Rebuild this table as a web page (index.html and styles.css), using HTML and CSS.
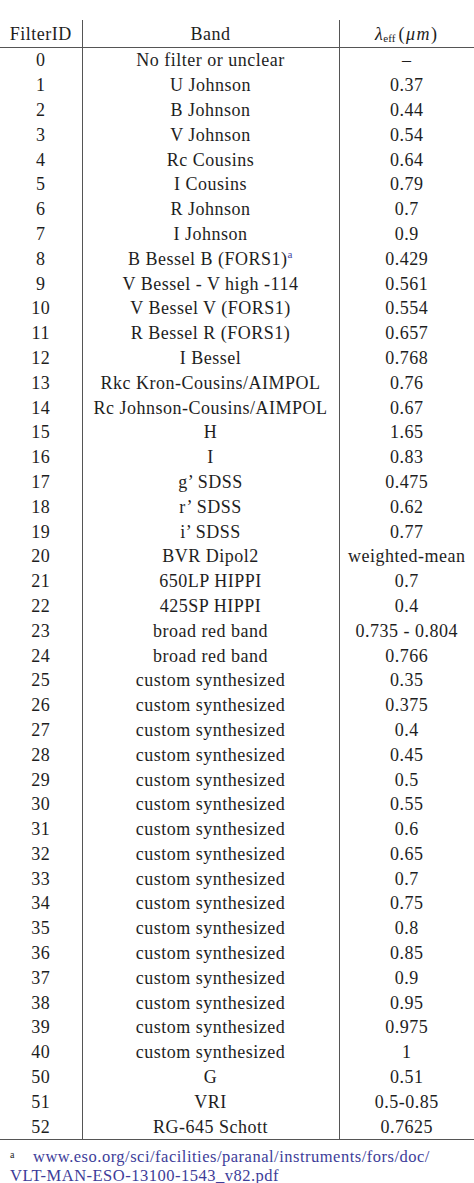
FILE: index.html
```html
<!DOCTYPE html>
<html>
<head>
<meta charset="utf-8">
<link rel="stylesheet" href="styles.css">
</head>
<body>
<div class="page">
<table class="filters">
<colgroup><col class="c1"><col class="c2"><col class="c3"></colgroup>
<thead>
<tr><th>FilterID</th><th>Band</th><th><i class="lam">λ</i><sub class="eff">eff</sub><span class="unit">(<i>μm</i>)</span></th></tr>
</thead>
<tbody>
<tr><td>0</td><td>No filter or unclear</td><td>–</td></tr>
<tr><td>1</td><td>U Johnson</td><td>0.37</td></tr>
<tr><td>2</td><td>B Johnson</td><td>0.44</td></tr>
<tr><td>3</td><td>V Johnson</td><td>0.54</td></tr>
<tr><td>4</td><td>Rc Cousins</td><td>0.64</td></tr>
<tr><td>5</td><td>I Cousins</td><td>0.79</td></tr>
<tr><td>6</td><td>R Johnson</td><td>0.7</td></tr>
<tr><td>7</td><td>I Johnson</td><td>0.9</td></tr>
<tr><td>8</td><td>B Bessel B (FORS1)<sup class="mark">a</sup></td><td>0.429</td></tr>
<tr><td>9</td><td>V Bessel - V high -114</td><td>0.561</td></tr>
<tr><td>10</td><td>V Bessel V (FORS1)</td><td>0.554</td></tr>
<tr><td>11</td><td>R Bessel R (FORS1)</td><td>0.657</td></tr>
<tr><td>12</td><td>I Bessel</td><td>0.768</td></tr>
<tr><td>13</td><td>Rkc Kron-Cousins/AIMPOL</td><td>0.76</td></tr>
<tr><td>14</td><td>Rc Johnson-Cousins/AIMPOL</td><td>0.67</td></tr>
<tr><td>15</td><td>H</td><td>1.65</td></tr>
<tr><td>16</td><td>I</td><td>0.83</td></tr>
<tr><td>17</td><td>g’ SDSS</td><td>0.475</td></tr>
<tr><td>18</td><td>r’ SDSS</td><td>0.62</td></tr>
<tr><td>19</td><td>i’ SDSS</td><td>0.77</td></tr>
<tr><td>20</td><td>BVR Dipol2</td><td>weighted-mean</td></tr>
<tr><td>21</td><td>650LP HIPPI</td><td>0.7</td></tr>
<tr><td>22</td><td>425SP HIPPI</td><td>0.4</td></tr>
<tr><td>23</td><td>broad red band</td><td>0.735 - 0.804</td></tr>
<tr><td>24</td><td>broad red band</td><td>0.766</td></tr>
<tr><td>25</td><td>custom synthesized</td><td>0.35</td></tr>
<tr><td>26</td><td>custom synthesized</td><td>0.375</td></tr>
<tr><td>27</td><td>custom synthesized</td><td>0.4</td></tr>
<tr><td>28</td><td>custom synthesized</td><td>0.45</td></tr>
<tr><td>29</td><td>custom synthesized</td><td>0.5</td></tr>
<tr><td>30</td><td>custom synthesized</td><td>0.55</td></tr>
<tr><td>31</td><td>custom synthesized</td><td>0.6</td></tr>
<tr><td>32</td><td>custom synthesized</td><td>0.65</td></tr>
<tr><td>33</td><td>custom synthesized</td><td>0.7</td></tr>
<tr><td>34</td><td>custom synthesized</td><td>0.75</td></tr>
<tr><td>35</td><td>custom synthesized</td><td>0.8</td></tr>
<tr><td>36</td><td>custom synthesized</td><td>0.85</td></tr>
<tr><td>37</td><td>custom synthesized</td><td>0.9</td></tr>
<tr><td>38</td><td>custom synthesized</td><td>0.95</td></tr>
<tr><td>39</td><td>custom synthesized</td><td>0.975</td></tr>
<tr><td>40</td><td>custom synthesized</td><td>1</td></tr>
<tr><td>50</td><td>G</td><td>0.51</td></tr>
<tr><td>51</td><td>VRI</td><td>0.5-0.85</td></tr>
<tr><td>52</td><td>RG-645 Schott</td><td>0.7625</td></tr>
</tbody>
</table>
<div class="footnote">
<span class="fmark">a</span><span class="flink">www.eso.org/sci/facilities/paranal/instruments/fors/doc/</span><br><span class="flink">VLT-MAN-ESO-13100-1543_v82.pdf</span>
</div>
</div>
</body>
</html>
```

FILE: styles.css
```css
html, body {
  margin: 0;
  padding: 0;
  background: #ffffff;
}
.page {
  width: 474px;
  padding-top: 20px;
  font-family: "Liberation Serif", "DejaVu Serif", serif;
  color: #1e1e1e;
}
.filters {
  width: 474px;
  table-layout: fixed;
  border-collapse: collapse;
  font-size: 18px;
  letter-spacing: 0.5px;
}
.c1 { width: 82px; }
.c2 { width: 257px; }
.c3 { width: 135px; }
.filters th,
.filters td {
  padding: 0;
  text-align: center;
  font-weight: normal;
  white-space: nowrap;
  height: 24.8px;
  line-height: 24px;
}
.filters th {
  height: 27px;
  border-bottom: 1px solid #555555;
}
.filters th:nth-child(2),
.filters td:nth-child(2) {
  border-left: 1px solid #555555;
  border-right: 1px solid #555555;
}
.filters tbody tr:last-child td {
  border-bottom: 1px solid #555555;
}
.eff {
  font-size: 11px;
  vertical-align: -2px;
  line-height: 0;
  letter-spacing: 0;
}
.unit {
  margin-left: 3px;
  letter-spacing: 1.5px;
}
.mark {
  font-size: 11px;
  color: #4a4aa6;
  line-height: 0;
  vertical-align: 7px;
}
.footnote {
  font-size: 16.5px;
  letter-spacing: 0.5px;
  line-height: 19px;
  padding-top: 5px;
  padding-left: 10px;
}
.fmark {
  font-size: 10px;
  vertical-align: 4px;
  display: inline-block;
  width: 23px;
}
.flink {
  color: #3d3d99;
}
```
